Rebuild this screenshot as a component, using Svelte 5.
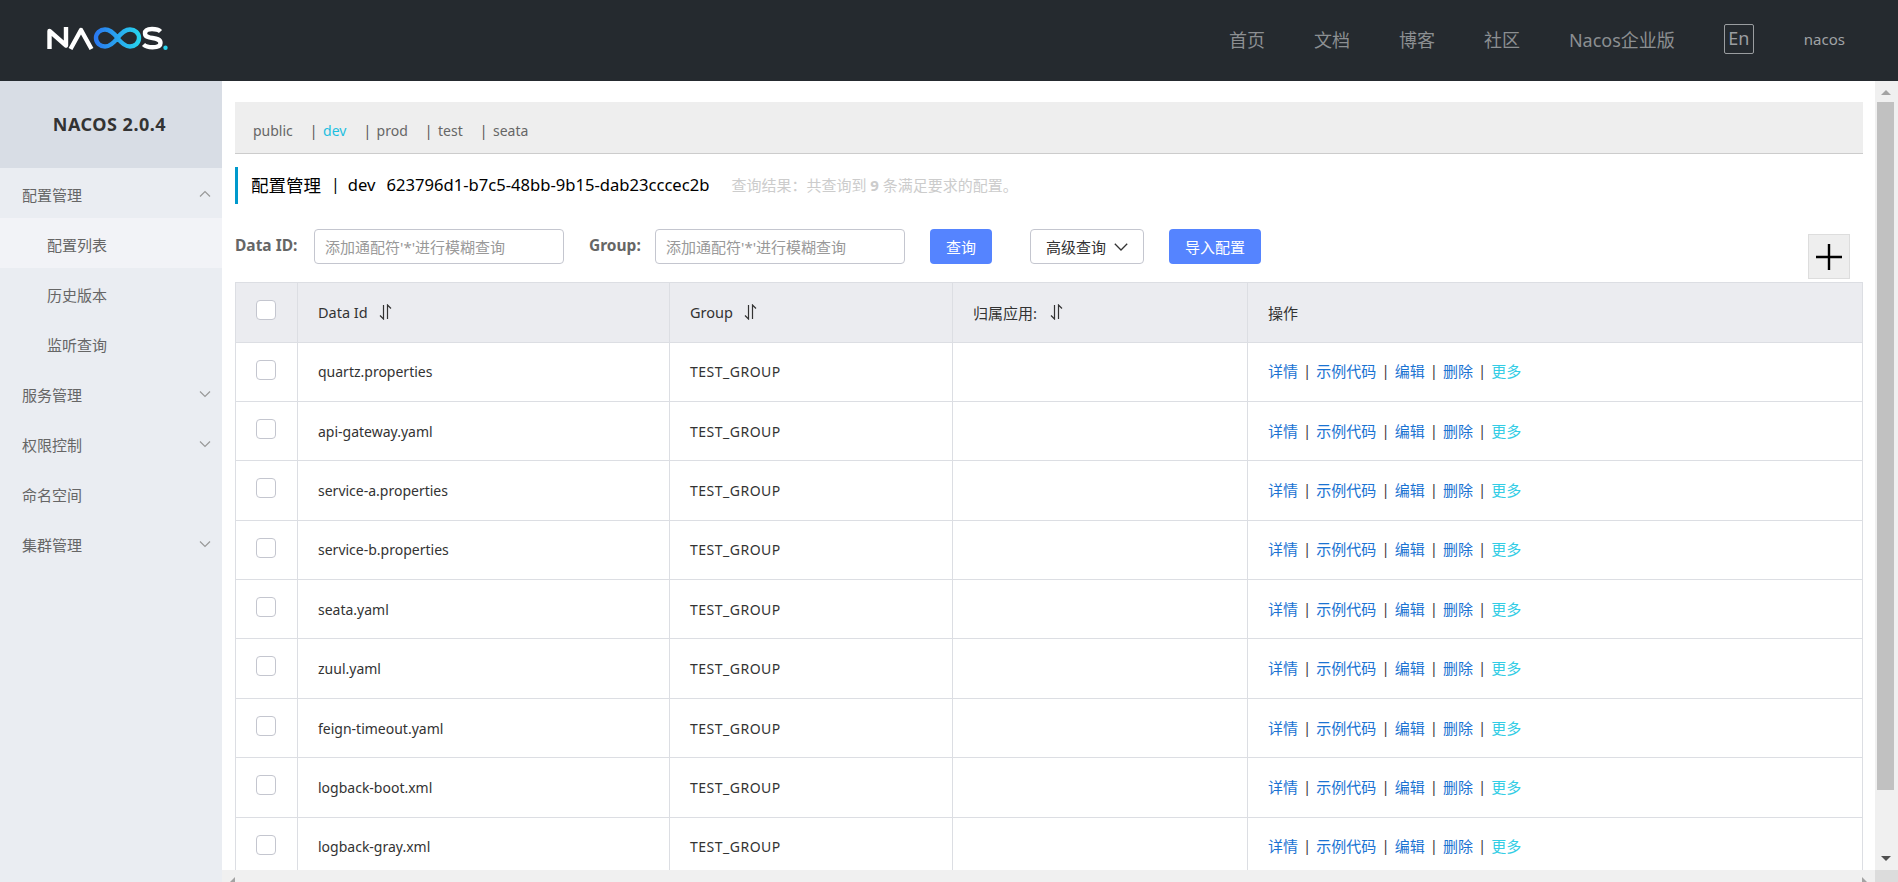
<script>
  const tabs = [
    { name: 'public' },
    { name: 'dev', active: true },
    { name: 'prod' },
    { name: 'test' },
    { name: 'seata' }
  ];
  const nav = ['首页', '文档', '博客', '社区', 'Nacos企业版'];
  const rows = [
    'quartz.properties', 'api-gateway.yaml', 'service-a.properties', 'service-b.properties',
    'seata.yaml', 'zuul.yaml', 'feign-timeout.yaml', 'logback-boot.xml', 'logback-gray.xml'
  ];
  const actions = ['详情', '示例代码', '编辑', '删除'];
  const menu = [
    { label: '配置管理', open: true },
    { label: '配置列表', sub: true, selected: true },
    { label: '历史版本', sub: true },
    { label: '监听查询', sub: true },
    { label: '服务管理', arrow: true },
    { label: '权限控制', arrow: true },
    { label: '命名空间' },
    { label: '集群管理', arrow: true }
  ];
</script>

{#snippet sortIcon()}
  <svg class="sort" width="15" height="16" viewBox="0 0 15 16" aria-hidden="true">
    <path d="M5.5 1v14L2 11.5" />
    <path d="M9.5 15V1L13 4.5" />
  </svg>
{/snippet}

<div class="page">
  <header class="top">
    <svg class="logo" width="125" height="26" viewBox="45 25 125 26" role="img" aria-label="NACOS">
      <defs>
        <linearGradient id="inf" x1="0" x2="1" y1="0" y2="0">
          <stop offset="0" stop-color="#2a79f0" />
          <stop offset="1" stop-color="#27d3ee" />
        </linearGradient>
      </defs>
      <path class="lt" d="M49.500 49V31L66 45.500V27" />
      <path class="lt" d="M70.500 49L81 30L91.500 49" />
      <path class="inf" d="M117.500 38C113 32 109.500 29.500 105 29.500C100 29.500 96 33 96 38C96 43 100 46.500 105 46.500C109.500 46.500 113 44 117.500 38C122 32 125.500 29.500 130 29.500C135 29.500 139 33 139 38C139 43 135 46.500 130 46.500C125.500 46.500 122 44 117.500 38Z" />
      <path class="lt" d="M160.500 31.500C158.500 29.500 155.500 29 152 29C147.500 29 145 30.500 145 33.500C145 40.500 160.500 35.500 160.500 43C160.500 46 157.500 47.300 152.500 47.300C148.500 47.300 145.500 46.500 143.500 44.500" />
      <circle cx="165.500" cy="47.800" r="2.200" fill="#27d3ee" />
    </svg>
    <nav class="nav">
      {#each nav as item}
        <span class="nav-item">{item}</span>
      {/each}
      <span class="lang">En</span>
      <span class="user">nacos</span>
    </nav>
  </header>

  <div class="body">
    <aside class="side">
      <div class="brand">NACOS 2.0.4</div>
      {#each menu as m}
        <div class="mi" class:sub={m.sub} class:sel={m.selected}>
          <span>{m.label}</span>
          {#if m.open || m.arrow}
            <svg class="chev" class:up={m.open} width="12" height="8" viewBox="0 0 12 8" aria-hidden="true">
              <path d="M1 1.500l5 5 5-5" />
            </svg>
          {/if}
        </div>
      {/each}
    </aside>

    <div class="panel">
      <main class="main">
        <div class="tabs">
          {#each tabs as t, i}
            {#if i > 0}<span class="sep">|</span>{/if}
            <span class="tab" class:active={t.active}>{t.name}</span>
          {/each}
        </div>

        <div class="title">
          <span class="t-name">配置管理</span>
          <span class="t-pipe">|</span>
          <span class="t-ns">dev</span>
          <span class="t-id">623796d1-b7c5-48bb-9b15-dab23cccec2b</span>
          <span class="result">查询结果：共查询到 <b>9</b> 条满足要求的配置。</span>
        </div>

        <div class="form">
          <label class="lbl" for="q1">Data ID:</label>
          <input id="q1" class="inp" placeholder="添加通配符'*'进行模糊查询" />
          <label class="lbl lbl2" for="q2">Group:</label>
          <input id="q2" class="inp" placeholder="添加通配符'*'进行模糊查询" />
          <button class="btn primary b1">查询</button>
          <button class="btn plain">
            高级查询
            <svg width="14" height="8" viewBox="0 0 14 8" aria-hidden="true"><path d="M.8.800L7 7l6.200-6.200" /></svg>
          </button>
          <button class="btn primary b2">导入配置</button>
          <div class="plus" aria-label="add">
            <svg width="26" height="26" viewBox="0 0 26 26" aria-hidden="true"><path d="M13 0v26M0 13h26" /></svg>
          </div>
        </div>

        <div class="table">
          <div class="row head">
            <div class="cell chk"><span class="box"></span></div>
            <div class="cell">Data Id {@render sortIcon()}</div>
            <div class="cell">Group {@render sortIcon()}</div>
            <div class="cell zh">归属应用: {@render sortIcon()}</div>
            <div class="cell zh">操作</div>
          </div>
          {#each rows as r}
            <div class="row">
              <div class="cell chk"><span class="box"></span></div>
              <div class="cell">{r}</div>
              <div class="cell grp">TEST_GROUP</div>
              <div class="cell"></div>
              <div class="cell ops">
                {#each actions as a}
                  <a href="#top">{a}</a><span class="pipe">|</span>
                {/each}
                <a href="#top" class="more">更多</a>
              </div>
            </div>
          {/each}
        </div>
      </main>

      <div class="vbar" aria-hidden="true">
        <span class="arrow a-up"></span>
        <span class="thumb"></span>
        <span class="arrow a-down"></span>
      </div>
      <div class="hbar" aria-hidden="true">
        <span class="arrow a-left"></span>
        <span class="arrow a-right"></span>
      </div>
      <div class="corner"></div>
    </div>
  </div>
</div>

<style>
  :global(html), :global(body) {
    margin: 0;
    overflow: hidden;
    height: 882px;
  }
  .page {
    width: 1898px;
    height: 893px;
    display: flex;
    flex-direction: column;
    font-family: "Noto Sans", "Noto Sans CJK SC", sans-serif;
    font-size: 14px;
    color: #333;
  }
  .top {
    flex: 0 0 81px;
    background: #252a2f;
    display: flex;
    align-items: center;
    justify-content: space-between;
    padding: 0 53px 0 45px;
    box-sizing: border-box;
  }
  .logo { margin-bottom: 5px; }
  .logo path { fill: none; stroke-width: 4.400; stroke-linejoin: round; }
  .logo .lt { stroke: #fff; }
  .logo .inf { stroke: url(#inf); }
  .nav {
    display: flex;
    align-items: center;
    color: #8c8f92;
    font-size: 18px;
    padding-bottom: 4px;
  }
  .nav-item { margin-right: 49px; }
  .lang {
    box-sizing: border-box;
    width: 30px;
    height: 30px;
    border: 1px solid #9a9da0;
    border-radius: 2px;
    line-height: 26px;
    text-align: center;
    margin-right: 50px;
    color: #9a9da0;
  }
  .user { font-size: 15px; color: #a0a3a6; }

  .body { flex: 1; display: flex; min-height: 0; }
  .side { flex: 0 0 222px; background: #eaedf2; }
  .brand {
    height: 87px;
    box-sizing: border-box;
    padding: 0 3px 2px 0;
    background: #d8dde5;
    display: flex;
    align-items: center;
    justify-content: center;
    font-size: 18px;
    letter-spacing: .5px;
    font-weight: 700;
    color: #333;
  }
  .mi {
    height: 50px;
    display: flex;
    align-items: center;
    justify-content: space-between;
    padding: 2px 11px 0 22px;
    font-size: 15px;
    color: #666;
    box-sizing: border-box;
  }
  .mi.sub { padding-left: 47px; }
  .mi.sel { background: #f2f3f7; }
  .chev path { fill: none; stroke: #999; stroke-width: 1.200; }
  .chev.up { transform: rotate(180deg); }

  .panel {
    flex: 1;
    min-width: 0;
    display: grid;
    grid-template-columns: 1fr 23px;
    grid-template-rows: 1fr 23px;
  }
  .main {
    min-width: 0;
    min-height: 0;
    overflow: hidden;
    padding: 21px 12px 0 13px;
    box-sizing: border-box;
    background: #fff;
  }
  .vbar {
    background: #f0f0f0;
    display: flex;
    flex-direction: column;
  }
  .thumb {
    width: 17px;
    height: 688px;
    margin: 7px 0 0 2px;
    background: #c1c1c1;
  }
  .hbar {
    background: #f0f0f0;
    display: flex;
    align-items: center;
    justify-content: space-between;
    padding: 0 8px;
  }
  .corner { background: #dcdcdc; }
  .arrow { display: block; width: 0; height: 0; border-style: solid; border-color: transparent; }
  .a-up {
    margin: 9px 0 0 6px;
    border-width: 0 5px 5px;
    border-bottom-color: #a3a3a3;
  }
  .a-down {
    margin: auto 0 9px 6px;
    border-width: 5px 5px 0;
    border-top-color: #505050;
  }
  .a-left { border-width: 5px 5px 5px 0; border-right-color: #a3a3a3; }
  .a-right { border-width: 5px 0 5px 5px; border-left-color: #a3a3a3; }

  .tabs {
    height: 52px;
    background: #eee;
    border-bottom: 1px solid #ccc;
    box-sizing: border-box;
    display: flex;
    align-items: center;
    padding: 5px 0 0 18px;
    color: #666;
  }
  .tab { margin-right: 17px; }
  .tab.active { color: #1ebfe0; }
  .sep { margin-right: 5.500px; color: #555; }

  .title {
    margin-top: 13px;
    height: 37px;
    box-sizing: border-box;
    border-left: 3px solid #09c;
    padding: 0 0 3px 13px;
    display: flex;
    align-items: center;
    color: #000;
  }
  .t-name { font-size: 17.500px; }
  .t-pipe { font-size: 16px; margin-left: 10px; }
  .t-ns { font-size: 16.600px; margin-left: 8px; }
  .t-id { font-size: 16.600px; margin-left: 11px; }
  .result { color: #ccc; font-size: 15px; margin-left: 22px; }

  .form {
    margin-top: 25px;
    height: 53px;
    display: flex;
    align-items: flex-start;
  }
  .lbl {
    width: 79px;
    line-height: 33px;
    font-size: 15.500px;
    font-weight: 700;
    color: #666;
  }
  .lbl2 { width: 66px; margin-left: 25px; }
  .inp {
    box-sizing: border-box;
    width: 250px;
    height: 35px;
    border: 1px solid #c4c6cf;
    border-radius: 4px;
    padding: 0 10px;
    font: 15px "Noto Sans", "Noto Sans CJK SC", sans-serif;
    outline: none;
  }
  .inp::placeholder { color: #999; }
  .btn {
    box-sizing: border-box;
    height: 35px;
    border-radius: 4px;
    font: 15px "Noto Sans", "Noto Sans CJK SC", sans-serif;
    padding: 0;
    display: flex;
    align-items: center;
    justify-content: center;
  }
  .primary { background: #5584ff; border: 0; color: #fff; }
  .b1 { width: 62px; margin-left: 25px; }
  .plain {
    width: 114px;
    margin-left: 38px;
    background: #fff;
    border: 1px solid #c4c6cf;
    color: #333;
    gap: 8px;
  }
  .plain path { fill: none; stroke: #333; stroke-width: 1.300; }
  .b2 { width: 92px; margin-left: 25px; }
  .plus {
    box-sizing: border-box;
    width: 42px;
    height: 45px;
    margin: 5px 13px 0 auto;
    background: #eee;
    border: 1px solid #ddd;
    display: flex;
    align-items: center;
    justify-content: center;
  }
  .plus path { stroke: #000; stroke-width: 2.400; fill: none; }

  .table {
    border: 1px solid #dcdee3;
    border-bottom: 0;
  }
  .row {
    display: grid;
    grid-template-columns: 62px 372px 283px 295px 1fr;
    height: 59.400px;
    box-sizing: border-box;
    border-bottom: 1px solid #dcdee3;
  }
  .row.head { height: 59.500px; background: #ebecf0; }
  .cell {
    display: flex;
    align-items: center;
    gap: 10px;
    padding: 0 0 0 20px;
    border-right: 1px solid #dcdee3;
    min-width: 0;
    color: #333;
  }
  .head .cell { font-size: 14.500px; }
  .head .cell.zh { font-size: 15px; gap: 12px; }
  .grp { letter-spacing: .5px; }
  .cell:last-child { border-right: 0; }
  .chk { padding: 0 0 0 20px; align-items: flex-start; }
  .box {
    box-sizing: border-box;
    width: 20px;
    height: 20px;
    margin-top: 17px;
    background: #fff;
    border: 1px solid #c4c6cf;
    border-radius: 4px;
  }
  .sort path { fill: none; stroke: #333; stroke-width: 1.200; }
  .ops { gap: 0; font-size: 15px; padding-bottom: 2px; }
  .ops a { color: #1a73d2; text-decoration: none; }
  .ops a.more { color: #33cde5; }
  .pipe { margin: 0 5.300px; color: #333; font-size: 14px; }
</style>
